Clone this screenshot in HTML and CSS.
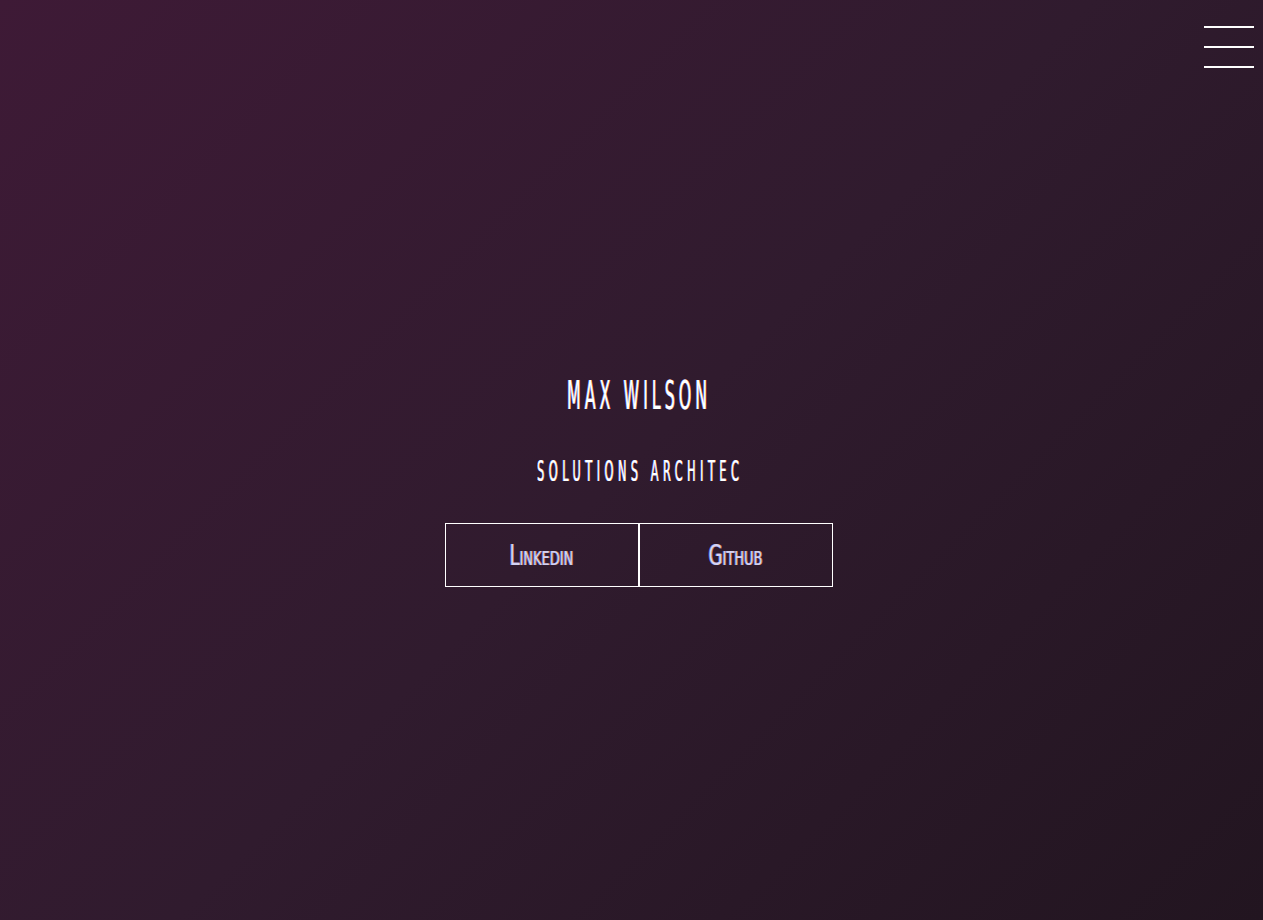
FILE: index.html
```html
<!DOCTYPE html>
<html lang="en">
<head>
<meta charset="utf-8">
<title>Max Wilson</title>
<link rel="stylesheet" href="styles.css">
</head>
<body>
<div class="page">
  <button class="menu" aria-label="Menu">
    <span class="bar"></span>
    <span class="bar"></span>
    <span class="bar"></span>
  </button>
  <main class="hero">
    <h1 class="name"><span class="squeeze">Max Wilson</span></h1>
    <h2 class="role"><span class="squeeze">Solutions Architec</span></h2>
    <div class="links">
      <a class="link" href="#"><span class="label">Linkedin</span></a>
      <a class="link" href="#"><span class="label">Github</span></a>
    </div>
  </main>
</div>
</body>
</html>
```
FILE: styles.css
```css
* { box-sizing: border-box; }
html, body { margin: 0; height: 100%; }
body {
  background: linear-gradient(135deg, #3e1a36 0%, #301b2e 50%, #221520 100%);
  font-family: "Liberation Sans Narrow", "DejaVu Sans Condensed", "Liberation Sans", sans-serif;
  color: #fff;
  overflow: hidden;
}
.page {
  position: relative;
  width: 100%;
  height: 920px;
  display: flex;
  align-items: center;
  justify-content: center;
}
.menu {
  position: absolute;
  top: 26px;
  right: 9px;
  width: 50px;
  height: 42px;
  padding: 0;
  border: 0;
  background: none;
  display: flex;
  flex-direction: column;
  justify-content: space-between;
}
.bar {
  display: block;
  height: 2px;
  width: 50px;
  background: #fff;
}
.hero {
  width: 100%;
  display: flex;
  flex-direction: column;
  align-items: center;
  text-align: center;
  margin-top: 43px;
  padding-left: 14px;
}
.name, .role {
  margin: 0;
  padding-right: 7px;
  font-weight: normal;
  text-transform: uppercase;
  text-shadow: -1px 0 #6a8cff, 1px 0 #ff9a50;
  width: 100%;
}
.squeeze {
  display: inline-block;
  transform: scaleX(0.45);
  margin-right: -9px;
}
.name {
  font-size: 39px;
  line-height: 40px;
  letter-spacing: 9px;
}
.role {
  margin-top: 41px;
  font-size: 28px;
  line-height: 30px;
  letter-spacing: 10px;
}
.role .squeeze { margin-right: -10px; }
.links {
  display: flex;
  justify-content: center;
  margin-top: 36px;
}
.link {
  width: 194px;
  height: 64px;
  border: 1px solid #fff;
  display: flex;
  align-items: center;
  justify-content: center;
  color: #d4d2f2;
  text-decoration: none;
  font-size: 28px;
  font-variant: small-caps;
  text-shadow: -1px 0 rgba(106, 140, 255, 0.8), 1px 0 rgba(255, 154, 80, 0.8);
}
.link:first-child { border-right: 1px solid #fff; }
.link + .link { border-left: 1px solid #fff; }
.label {
  display: inline-block;
  transform: scaleX(0.72);
}
```
